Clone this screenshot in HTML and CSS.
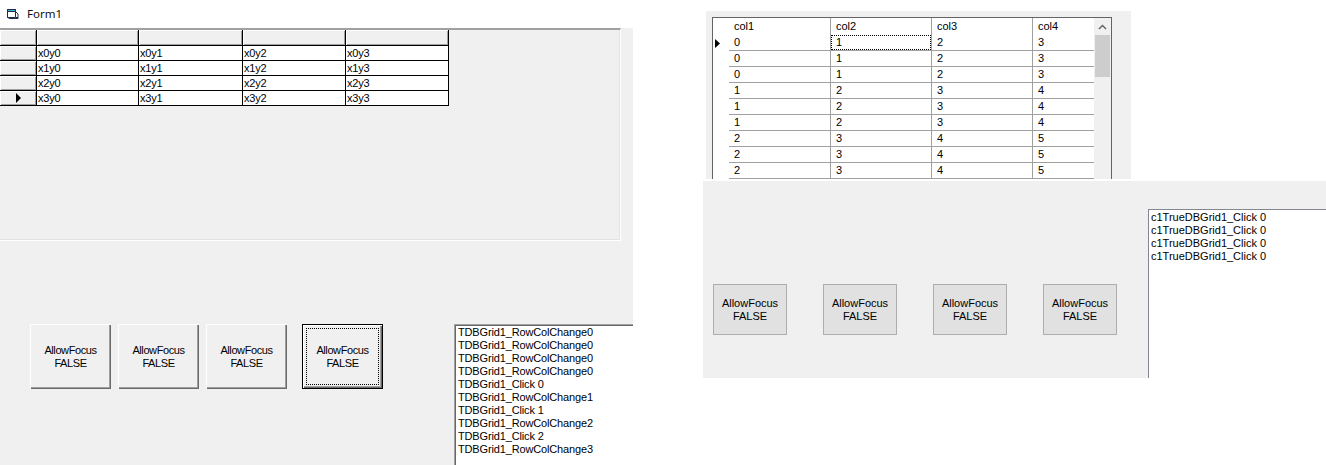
FILE: index.html
```html
<!DOCTYPE html>
<html lang="en">
<head>
<meta charset="utf-8">
<title>Form1</title>
<link rel="stylesheet" href="styles.css">
</head>
<body>
<div class="stage">
  <section class="vb">
    <header class="vb-title">
      <svg class="vb-icon" width="13" height="12" viewBox="0 0 13 12">
        <path d="M1.5 2.5 H9.5 V10.5 H1.5 Z" fill="#fff" stroke="#1f2a44"/>
        <path d="M1.5 2.5 H9.5 V4.5 H1.5 Z" fill="#38b6d9" stroke="#1f2a44"/>
        <path d="M9.5 4.5 L12 7 V11.5 H4 L1.5 10.5" fill="none" stroke="#1f2a44"/>
        <rect x="10" y="10" width="2" height="2" fill="#1f2a44"/>
      </svg>
      <span class="vb-caption">Form1</span>
    </header>
    <div class="vb-body">
      <div class="tdb">
        <div class="tdb-grid">
          <div class="hc"></div><div class="hc"></div><div class="hc"></div><div class="hc"></div><div class="hc"></div>
          <div class="rs"></div><div class="dc">x0y0</div><div class="dc">x0y1</div><div class="dc">x0y2</div><div class="dc">x0y3</div>
          <div class="rs"></div><div class="dc">x1y0</div><div class="dc">x1y1</div><div class="dc">x1y2</div><div class="dc">x1y3</div>
          <div class="rs"></div><div class="dc">x2y0</div><div class="dc">x2y1</div><div class="dc">x2y2</div><div class="dc">x2y3</div>
          <div class="rs rs-cur"><svg width="6" height="10" viewBox="0 0 6 10"><path d="M0 0 L5 5 L0 10 Z" fill="#000"/></svg></div><div class="dc">x3y0</div><div class="dc">x3y1</div><div class="dc">x3y2</div><div class="dc">x3y3</div>
        </div>
      </div>
      <div class="vb-lower">
        <div class="vb-buttons">
          <button class="vbtn"><span class="vbtn-text">AllowFocus<br>FALSE</span></button>
          <button class="vbtn"><span class="vbtn-text">AllowFocus<br>FALSE</span></button>
          <button class="vbtn"><span class="vbtn-text">AllowFocus<br>FALSE</span></button>
          <button class="vbtn vbtn-default"><span class="vbtn-text vbtn-focus">AllowFocus<br>FALSE</span></button>
        </div>
        <div class="vb-list">
          <div>TDBGrid1_RowColChange0</div>
          <div>TDBGrid1_RowColChange0</div>
          <div>TDBGrid1_RowColChange0</div>
          <div>TDBGrid1_RowColChange0</div>
          <div>TDBGrid1_Click 0</div>
          <div>TDBGrid1_RowColChange1</div>
          <div>TDBGrid1_Click 1</div>
          <div>TDBGrid1_RowColChange2</div>
          <div>TDBGrid1_Click 2</div>
          <div>TDBGrid1_RowColChange3</div>
        </div>
      </div>
    </div>
  </section>

  <section class="net">
    <div class="net-top">
      <div class="c1grid">
        <div class="c1main">
          <div class="cs"></div><div class="ch">col1</div><div class="ch">col2</div><div class="ch">col3</div><div class="ch ch-last">col4</div>

          <div class="cs"><svg width="7" height="11" viewBox="0 0 7 11"><path d="M1 1 L6 5.5 L1 10 Z" fill="#000"/></svg></div><div class="cd">0</div><div class="cd cd-focus"><span class="focus-rect"></span>1</div><div class="cd">2</div><div class="cd cd-last">3</div>
          <div class="cs"></div><div class="cd">0</div><div class="cd">1</div><div class="cd">2</div><div class="cd cd-last">3</div>
          <div class="cs"></div><div class="cd">0</div><div class="cd">1</div><div class="cd">2</div><div class="cd cd-last">3</div>
          <div class="cs"></div><div class="cd">1</div><div class="cd">2</div><div class="cd">3</div><div class="cd cd-last">4</div>
          <div class="cs"></div><div class="cd">1</div><div class="cd">2</div><div class="cd">3</div><div class="cd cd-last">4</div>
          <div class="cs"></div><div class="cd">1</div><div class="cd">2</div><div class="cd">3</div><div class="cd cd-last">4</div>
          <div class="cs"></div><div class="cd">2</div><div class="cd">3</div><div class="cd">4</div><div class="cd cd-last">5</div>
          <div class="cs"></div><div class="cd">2</div><div class="cd">3</div><div class="cd">4</div><div class="cd cd-last">5</div>
          <div class="cs"></div><div class="cd">2</div><div class="cd">3</div><div class="cd">4</div><div class="cd cd-last">5</div>
        </div>
        <div class="c1scroll">
          <div class="c1scroll-up">
            <svg width="9" height="6" viewBox="0 0 9 6"><path d="M1 5 L4.5 1.5 L8 5" fill="none" stroke="#606060" stroke-width="1.4"/></svg>
          </div>
          <div class="c1scroll-thumb"></div>
        </div>
      </div>
    </div>
    <div class="net-bottom">
      <div class="net-buttons">
        <button class="nbtn">AllowFocus<br>FALSE</button>
        <button class="nbtn">AllowFocus<br>FALSE</button>
        <button class="nbtn">AllowFocus<br>FALSE</button>
        <button class="nbtn">AllowFocus<br>FALSE</button>
      </div>
      <div class="net-list">
        <div>c1TrueDBGrid1_Click 0</div>
        <div>c1TrueDBGrid1_Click 0</div>
        <div>c1TrueDBGrid1_Click 0</div>
        <div>c1TrueDBGrid1_Click 0</div>
      </div>
    </div>
  </section>
</div>
</body>
</html>
```

FILE: styles.css
```css
* { box-sizing: border-box; }
html, body { margin: 0; padding: 0; }
body {
  width: 1326px;
  height: 465px;
  overflow: hidden;
  background: #fff;
  color: #000;
  font-family: "Liberation Sans", Arial, sans-serif;
  font-size: 11px;
}
.stage { display: flex; align-items: flex-start; height: 465px; }

/* ---------- left: VB6 form ---------- */
.vb { width: 633px; height: 465px; display: flex; flex-direction: column; }
.vb-title {
  height: 28px;
  display: flex;
  align-items: center;
  gap: 8px;
  padding: 0 0 2px 6px;
  background: #fff;
}
.vb-icon { display: block; flex: none; }
.vb-caption {
  font-family: "Noto Sans", "Open Sans", sans-serif;
  font-size: 11.5px;
  color: #111;
}
.vb-body {
  flex: 1;
  display: flex;
  flex-direction: column;
  background: #f0f0f0;
}
.tdb {
  width: 621px;
  height: 213px;
  border-top: 2px solid #a0a0a0;
  border-right: 1px solid #fff;
  border-bottom: 1px solid #fff;
  box-shadow: inset -1px -1px #e3e3e3;
  background: #f0f0f0;
}
.tdb-grid {
  display: grid;
  grid-template-columns: 37px 102px 104px 103px 103px;
  grid-template-rows: 16px repeat(4, 15px);
  width: max-content;
}
.hc, .rs {
  background: #f0f0f0;
  border-right: 1px solid #000;
  border-bottom: 1px solid #000;
  box-shadow: inset 1px 1px #fff, inset -1px -1px #a0a0a0;
}
.rs-cur { display: flex; align-items: center; padding-left: 16px; }
.rs-cur svg { display: block; }
.dc {
  background: #fff;
  border-right: 1px solid #000;
  border-bottom: 1px solid #000;
  padding-left: 1px;
  line-height: 14px;
  letter-spacing: -0.2px;
  white-space: nowrap;
}

.vb-lower { flex: 1; display: flex; margin-top: 83px; }
.vb-buttons {
  width: 454px;
  display: flex;
  align-items: flex-start;
  gap: 7px;
  padding-left: 30px;
}
.vbtn {
  width: 81px;
  height: 65px;
  padding: 0;
  margin: 0;
  border: none;
  background: #f0f0f0;
  box-shadow: inset 1px 1px #fff, inset -1px -1px #696969, inset -2px -2px #a0a0a0;
  font-family: "Liberation Sans", Arial, sans-serif;
  font-size: 11px;
  line-height: 13px;
  letter-spacing: -0.4px;
  color: #000;
  display: flex;
}
.vbtn-text {
  flex: 1;
  display: flex;
  align-items: center;
  justify-content: center;
  text-align: center;
}
.vbtn-default {
  margin-left: 8px;
  border: 1px solid #000;
  padding: 3px;
}
.vbtn-focus { border: 1px dotted #000; }
.vb-list {
  flex: 1;
  background: #fff;
  border-top: 1px solid #a0a0a0;
  border-left: 1px solid #a0a0a0;
  box-shadow: inset 1px 1px #696969;
  padding: 1px 0 0 3px;
  line-height: 13px;
  letter-spacing: -0.15px;
  white-space: nowrap;
  overflow: hidden;
}

/* ---------- right: .NET form ---------- */
.net { width: 623px; margin-left: 70px; display: flex; flex-direction: column; }
.net-top {
  width: 425px;
  height: 168px;
  margin: 11px 0 0 3px;
  padding: 6px 0 0 6px;
  background: #f0f0f0;
  overflow: hidden;
}
.c1grid {
  width: 400px;
  height: 162px;
  display: flex;
  background: #fff;
  border: 1px solid #646464;
  border-bottom: none;
  overflow: hidden;
}
.c1main {
  width: 381px;
  display: grid;
  grid-template-columns: 16px 102px 101px 101px 61px;
  grid-template-rows: 17px;
  grid-auto-rows: 16px;
  align-content: start;
}
.cs { display: flex; align-items: center; padding-left: 1px; }
.cs svg { display: block; }
.ch {
  border-right: 1px solid #a0a0a0;
  padding-left: 5px;
  line-height: 17px;
}
.cd {
  border-right: 1px solid #a0a0a0;
  border-bottom: 1px solid #a0a0a0;
  padding-left: 5px;
  line-height: 15px;
}
.ch-last, .cd-last { border-right: none; }
.cd-focus { position: relative; }
.focus-rect {
  position: absolute;
  inset: 0;
  border: 1px dotted #000;
}
.c1scroll {
  width: 17px;
  background: #f0f0f0;
  display: flex;
  flex-direction: column;
}
.c1scroll-up {
  height: 17px;
  display: flex;
  align-items: center;
  justify-content: center;
}
.c1scroll-up svg { display: block; }
.c1scroll-thumb {
  height: 42px;
  margin: 0 1px;
  background: #cdcdcd;
}

.net-bottom {
  height: 197px;
  margin-top: 2px;
  background: #f0f0f0;
  display: flex;
  align-items: flex-start;
}
.net-buttons {
  width: 445px;
  display: flex;
  gap: 36px;
  padding-left: 10px;
  margin-top: 103px;
}
.nbtn {
  width: 74px;
  height: 51px;
  padding: 0;
  margin: 0;
  background: #e1e1e1;
  border: 1px solid #adadad;
  font-family: "Liberation Sans", Arial, sans-serif;
  font-size: 11px;
  line-height: 13px;
  color: #000;
  text-align: center;
}
.net-list {
  flex: 1;
  align-self: stretch;
  margin-top: 28px;
  background: #fff;
  border-top: 1px solid #828790;
  border-left: 1px solid #828790;
  padding: 1px 0 0 2px;
  line-height: 13px;
  white-space: nowrap;
  overflow: hidden;
}
```
